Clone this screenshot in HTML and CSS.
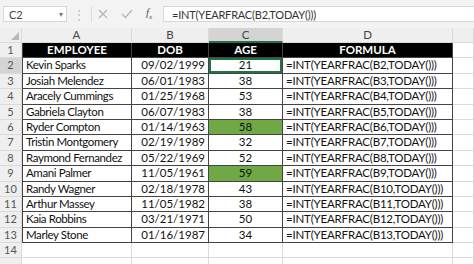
FILE: index.html
```html
<!DOCTYPE html>
<html>
<head>
<meta charset="UTF-8">
<title>Возраст сотрудников</title>
<link rel="stylesheet" href="styles.css">
</head>
<body>
	<!-- строка формул -->
	<div class="toolbar">
		<div class="namebox">C2<span class="drop">&#9662;</span></div>
		<div class="dots">&#8942;</div>
		<div class="btns">
			<svg width="10" height="10" viewBox="0 0 10 10"><path d="M1 1L9 9M9 1L1 9" stroke="#b5b5b5" stroke-width="1.2"/></svg>
			<svg width="12" height="10" viewBox="0 0 12 10"><path d="M1 5L4.5 8.5L11 1" fill="none" stroke="#b5b5b5" stroke-width="1.2"/></svg>
			<span class="fx">f<sub>x</sub></span>
		</div>
		<div class="formula">=INT(YEARFRAC(B2,TODAY()))</div>
	</div>

	<!-- лист -->
	<div class="sheet">
		<div class="corner"></div>
		<div class="ch">A</div>
		<div class="ch">B</div>
		<div class="ch on">C</div>
		<div class="ch">D</div>
		<div class="ch"></div>

		<div class="rh">1</div>
		<div class="c t hd first">EMPLOYEE</div>
		<div class="c t hd">DOB</div>
		<div class="c t hd">AGE</div>
		<div class="c t hd">FORMULA</div>
		<div class="c"></div>

		<div class="rh on">2</div>
		<div class="c t first">Kevin Sparks</div>
		<div class="c t num">09/02/1999</div>
		<div class="c t mid sel">21</div>
		<div class="c t fml">=INT(YEARFRAC(B2,TODAY()))</div>
		<div class="c"></div>

		<div class="rh">3</div>
		<div class="c t first">Josiah Melendez</div>
		<div class="c t num">06/01/1983</div>
		<div class="c t mid">38</div>
		<div class="c t fml">=INT(YEARFRAC(B3,TODAY()))</div>
		<div class="c"></div>

		<div class="rh">4</div>
		<div class="c t first">Aracely Cummings</div>
		<div class="c t num">01/25/1968</div>
		<div class="c t mid">53</div>
		<div class="c t fml">=INT(YEARFRAC(B4,TODAY()))</div>
		<div class="c"></div>

		<div class="rh">5</div>
		<div class="c t first">Gabriela Clayton</div>
		<div class="c t num">06/07/1983</div>
		<div class="c t mid">38</div>
		<div class="c t fml">=INT(YEARFRAC(B5,TODAY()))</div>
		<div class="c"></div>

		<div class="rh">6</div>
		<div class="c t first">Ryder Compton</div>
		<div class="c t num">01/14/1963</div>
		<div class="c t mid green">58</div>
		<div class="c t fml">=INT(YEARFRAC(B6,TODAY()))</div>
		<div class="c"></div>

		<div class="rh">7</div>
		<div class="c t first">Tristin Montgomery</div>
		<div class="c t num">02/19/1989</div>
		<div class="c t mid">32</div>
		<div class="c t fml">=INT(YEARFRAC(B7,TODAY()))</div>
		<div class="c"></div>

		<div class="rh">8</div>
		<div class="c t first">Raymond Fernandez</div>
		<div class="c t num">05/22/1969</div>
		<div class="c t mid">52</div>
		<div class="c t fml">=INT(YEARFRAC(B8,TODAY()))</div>
		<div class="c"></div>

		<div class="rh">9</div>
		<div class="c t first">Amani Palmer</div>
		<div class="c t num">11/05/1961</div>
		<div class="c t mid green">59</div>
		<div class="c t fml">=INT(YEARFRAC(B9,TODAY()))</div>
		<div class="c"></div>

		<div class="rh">10</div>
		<div class="c t first">Randy Wagner</div>
		<div class="c t num">02/18/1978</div>
		<div class="c t mid">43</div>
		<div class="c t fml">=INT(YEARFRAC(B10,TODAY()))</div>
		<div class="c"></div>

		<div class="rh">11</div>
		<div class="c t first">Arthur Massey</div>
		<div class="c t num">11/05/1982</div>
		<div class="c t mid">38</div>
		<div class="c t fml">=INT(YEARFRAC(B11,TODAY()))</div>
		<div class="c"></div>

		<div class="rh">12</div>
		<div class="c t first">Kaia Robbins</div>
		<div class="c t num">03/21/1971</div>
		<div class="c t mid">50</div>
		<div class="c t fml">=INT(YEARFRAC(B12,TODAY()))</div>
		<div class="c"></div>

		<div class="rh">13</div>
		<div class="c t first">Marley Stone</div>
		<div class="c t num">01/16/1987</div>
		<div class="c t mid">34</div>
		<div class="c t fml">=INT(YEARFRAC(B13,TODAY()))</div>
		<div class="c"></div>

		<div class="rh">14</div>
		<div class="c"></div>
		<div class="c"></div>
		<div class="c"></div>
		<div class="c"></div>
		<div class="c"></div>

		<div class="rh"></div>
		<div class="c"></div>
		<div class="c"></div>
		<div class="c"></div>
		<div class="c"></div>
		<div class="c"></div>
	</div>
</body>
</html>
```

FILE: styles.css
```css
body {
  margin: 0;
  width: 474px;
  height: 264px;
  overflow: hidden;
  background-color: #fff;
  font-family: Lato, "Open Sans", sans-serif;
  color: #111;
}

/* строка формул */
.toolbar {
  display: flex;
  align-items: center;
  height: 28px;
  background-color: #f3f3f3;
  font-size: 11px;
  color: #444;
}

.namebox {
  display: flex;
  align-items: center;
  justify-content: space-between;
  box-sizing: border-box;
  width: 64px;
  height: 16px;
  margin-left: 3px;
  padding: 0 3px 0 5px;
  background-color: #fff;
  border: 1px solid #d6d6d6;
}

.drop {
  font-size: 8px;
  color: #777;
}

.dots {
  width: 24px;
  text-align: center;
  color: #c0c0c0;
  font-size: 12px;
}

.btns {
  display: flex;
  align-items: center;
  gap: 13px;
  box-sizing: border-box;
  height: 16px;
  padding-left: 6px;
  border-left: 1px solid #dcdcdc;
  width: 72px;
}

.fx {
  font-family: "Liberation Serif", serif;
  font-style: italic;
  font-size: 11px;
  color: #555;
}

.fx sub {
  font-size: 7px;
}

.formula {
  flex: 1;
  box-sizing: border-box;
  height: 16px;
  line-height: 15px;
  padding-left: 8px;
  background-color: #fff;
  border: 1px solid #d6d6d6;
  border-right: none;
  font-size: 11px;
  letter-spacing: -0.2px;
  color: #333;
}

/* лист */
.sheet {
  display: grid;
  grid-template-columns: 22px 110px 77px 74px 170px 21px;
  grid-template-rows: 15px;
  grid-auto-rows: 15.4px;
  font-size: 11.5px;
}

.sheet > div {
  box-sizing: border-box;
  border-right: 1px solid #dadada;
  border-bottom: 1px solid #dadada;
  white-space: nowrap;
  overflow: hidden;
  line-height: 14px;
}

.corner {
  position: relative;
  background-color: #efefef;
}

.corner::after {
  content: "";
  position: absolute;
  right: 2px;
  bottom: 2px;
  border-left: 8px solid transparent;
  border-bottom: 8px solid #b9b9b9;
}

.ch {
  background-color: #efefef;
  text-align: center;
  color: #444;
}

.ch.on {
  background-color: #d4d4d4;
  border-bottom: 2px solid #217346 !important;
}

.rh {
  background-color: #efefef;
  text-align: center;
  color: #555;
  font-size: 11px;
}

.rh.on {
  background-color: #d4d4d4;
}

.sheet > .t {
  border-right-color: #444;
  border-bottom-color: #444;
  padding: 0 3px;
}

.first {
  border-left: 1px solid #444;
  letter-spacing: -0.4px;
}

.fml {
  letter-spacing: -0.2px;
}

.hd {
  background-color: #000;
  color: #fff;
  font-weight: bold;
  text-align: center;
  letter-spacing: 0;
}

.num {
  text-align: right;
}

.mid {
  text-align: center;
}

.green {
  background-color: #70a846;
}

.sel {
  box-shadow: inset 0 0 0 2px #217346;
}
```
